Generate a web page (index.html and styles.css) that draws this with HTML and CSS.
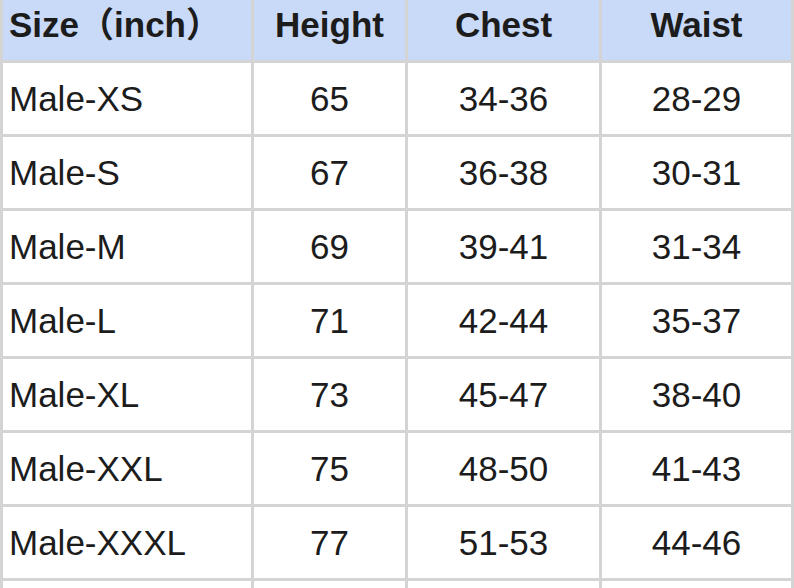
FILE: index.html
```html
<!DOCTYPE html>
<html>
<head>
<meta charset="utf-8">
<link rel="stylesheet" href="styles.css">
</head>
<body>
<table class="size-table">
  <colgroup>
    <col class="c1"><col class="c2"><col class="c3"><col class="c4">
  </colgroup>
  <thead>
    <tr><th class="first">Size（inch）</th><th>Height</th><th>Chest</th><th>Waist</th></tr>
  </thead>
  <tbody>
    <tr><td class="first">Male-XS</td><td>65</td><td>34-36</td><td>28-29</td></tr>
    <tr><td class="first">Male-S</td><td>67</td><td>36-38</td><td>30-31</td></tr>
    <tr><td class="first">Male-M</td><td>69</td><td>39-41</td><td>31-34</td></tr>
    <tr><td class="first">Male-L</td><td>71</td><td>42-44</td><td>35-37</td></tr>
    <tr><td class="first">Male-XL</td><td>73</td><td>45-47</td><td>38-40</td></tr>
    <tr><td class="first">Male-XXL</td><td>75</td><td>48-50</td><td>41-43</td></tr>
    <tr><td class="first">Male-XXXL</td><td>77</td><td>51-53</td><td>44-46</td></tr>
    <tr><td class="first">&nbsp;</td><td></td><td></td><td></td></tr>
  </tbody>
</table>
</body>
</html>
```
FILE: styles.css
```css
html, body {
  margin: 0;
  padding: 0;
  background: #ffffff;
  overflow: hidden;
}
.size-table {
  border-collapse: collapse;
  table-layout: fixed;
  width: 794px;
  margin-top: -14px;
  margin-left: 0;
  font-family: "Liberation Sans", Arial, "Noto Sans CJK SC", sans-serif;
  font-size: 35px;
  color: #1c1c1c;
}
.c1 { width: 251px; }
.c2 { width: 154px; }
.c3 { width: 194px; }
.c4 { width: 192px; }
.size-table th,
.size-table td {
  border: 3px solid #d4d4d4;
  height: 71px;
  padding: 0;
  text-align: center;
  vertical-align: middle;
  line-height: 1;
}
.size-table th {
  background: #c9daf8;
  font-weight: bold;
}
.size-table .first {
  text-align: left;
  padding-left: 6px;
}
```
